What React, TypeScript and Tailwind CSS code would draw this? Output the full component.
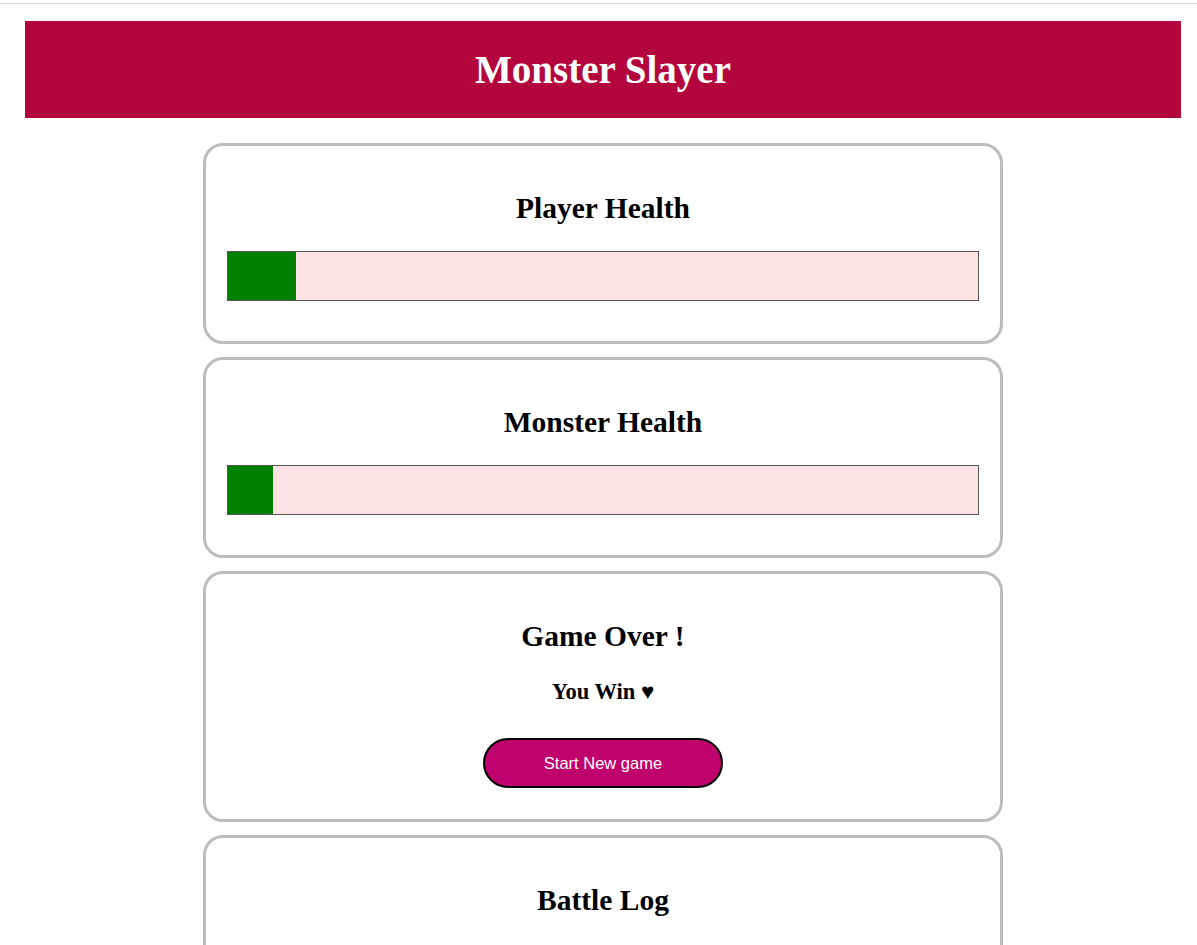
import React from 'react';

const serif = "font-['Liberation_Serif','Times_New_Roman',serif]";

function HealthBar({ percent }: { percent: number }) {
  return (
    <div className="h-[50px] w-full border border-[#555555] bg-[#fde3e3]">
      <div className="h-full bg-[#008000]" style={{ width: `${percent}%` }} />
    </div>
  );
}

function Card({ children, className = '' }: { children: React.ReactNode; className?: string }) {
  return (
    <section
      className={`mx-auto w-[800px] rounded-[20px] border-[3px] border-[#bdbdbd] bg-white px-[21px] pt-[46px] text-center ${className}`}
    >
      {children}
    </section>
  );
}

export default function App() {
  return (
    <div className={`min-h-screen bg-white ${serif}`}>
      <div className="h-[3px]" />
      <div className="h-px bg-[#dedede]" />
      <div className="pl-[25px] pr-[16px] pt-[17px] pb-[40px]">
        <header className="flex h-[97px] items-center justify-center bg-[#b3063c]">
          <h1 className="text-[39px] font-bold leading-none text-white">Monster Slayer</h1>
        </header>

        <div className="mt-[25px] flex flex-col gap-[13px]">
          <Card className="pb-[40px]">
            <h2 className="mb-[26px] text-[29.5px] font-bold leading-[33px] text-black">Player Health</h2>
            <HealthBar percent={9} />
          </Card>

          <Card className="pb-[40px]">
            <h2 className="mb-[26px] text-[29.5px] font-bold leading-[33px] text-black">Monster Health</h2>
            <HealthBar percent={6} />
          </Card>

          <Card className="pb-[31px]">
            <h2 className="text-[29.5px] font-bold leading-[33px] text-black">Game Over !</h2>
            <h3 className="mt-[27px] text-[22.5px] font-bold leading-[24px] text-black">You Win ♥</h3>
            <button className="mt-[34px] h-[50px] w-[240px] rounded-full border-2 border-black bg-[#c0026e] font-['Liberation_Sans',Arial,sans-serif] text-[16.5px] text-white">
              Start New game
            </button>
          </Card>

          <Card className="pb-[40px]">
            <h2 className="text-[29.5px] font-bold leading-[33px] text-black">Battle Log</h2>
            <ul className="mt-[26px] min-h-[60px] list-none" />
          </Card>
        </div>
      </div>
    </div>
  );
}
